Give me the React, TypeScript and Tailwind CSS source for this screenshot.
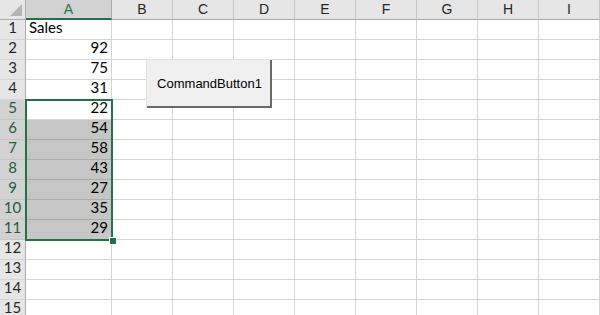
import React from 'react';

const COLS = ['A', 'B', 'C', 'D', 'E', 'F', 'G', 'H', 'I'];
const ROWS = Array.from({ length: 15 }, (_, i) => i + 1);

const values: Record<number, string> = {
  1: 'Sales',
  2: '92',
  3: '75',
  4: '31',
  5: '22',
  6: '54',
  7: '58',
  8: '43',
  9: '27',
  10: '35',
  11: '29',
};

// rows 5-11 are selected, A5 is the active cell
const isSelected = (r: number) => r >= 5 && r <= 11;

export default function App() {
  return (
    <div className="relative w-[600px] h-[315px] overflow-hidden bg-white font-['Lato','Liberation_Sans',sans-serif] text-[15px] text-black">
      <div className="grid grid-cols-[26px_86px_repeat(8,61px)] auto-rows-[20px]">
        {/* Corner */}
        <div className="relative bg-[#e6e6e6] border-r border-b border-[#ababab]">
          <div className="absolute right-[3px] bottom-[3px] w-0 h-0 border-l-[12px] border-l-transparent border-b-[12px] border-b-[#b4b4b4]" />
        </div>
        {/* Column headers */}
        {COLS.map((c) =>
          c === 'A' ? (
            <div
              key={c}
              className="flex items-center justify-center bg-[#d2d2d2] border-r border-r-[#ababab] border-b-2 border-b-[#217346] text-[#217346] font-['Liberation_Sans',sans-serif] text-[14px]"
            >
              {c}
            </div>
          ) : (
            <div
              key={c}
              className="flex items-center justify-center bg-[#e6e6e6] border-r border-r-[#c6c6c6] border-b border-b-[#ababab] text-[#262626] font-['Liberation_Sans',sans-serif] text-[14px]"
            >
              {c}
            </div>
          )
        )}

        {ROWS.map((r) => (
          <React.Fragment key={r}>
            <div
              className={`flex items-end justify-center pb-[1px] border-r border-r-[#ababab] border-b ${
                isSelected(r)
                  ? 'bg-[#d2d2d2] text-[#1e5e3a] border-b-[#c6c6c6]'
                  : 'bg-[#e6e6e6] text-[#262626] border-b-[#d4d4d4]'
              }`}
            >
              {r}
            </div>
            {COLS.map((c) => {
              if (c !== 'A') {
                return <div key={c} className="border-r border-b border-[#d4d4d4]" />;
              }
              const v = values[r];
              const shaded = r >= 6 && r <= 11;
              return (
                <div
                  key={c}
                  className={`flex items-end pb-[1px] px-[3px] border-r border-b ${
                    shaded ? 'bg-[#c6c6c6] border-[#ababab]' : 'border-[#d4d4d4]'
                  } ${r === 1 ? 'justify-start' : 'justify-end'}`}
                >
                  {v}
                </div>
              );
            })}
          </React.Fragment>
        ))}
      </div>

      {/* Selection outline A5:A11 */}
      <div className="absolute left-[25px] top-[99px] w-[88px] h-[142px] border-2 border-[#217346] pointer-events-none" />
      <div className="absolute left-[109px] top-[237px] w-[6px] h-[6px] bg-[#217346] border border-white box-content" />

      {/* ActiveX command button */}
      <div className="absolute left-[146px] top-[59px] w-[126px] h-[49px] flex items-center justify-center bg-[#f0f0f0] border-t border-l border-[#e3e3e3] shadow-[inset_-2px_-2px_0_#696969] font-['Liberation_Sans',sans-serif] text-[13px] text-black">
        CommandButton1
      </div>
    </div>
  );
}
